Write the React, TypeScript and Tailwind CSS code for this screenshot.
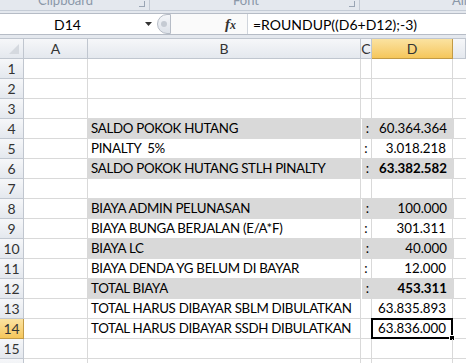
const font = { fontFamily: "Lato, 'Open Sans', sans-serif" };

type Row = {
  n: number;
  label?: string;
  colon?: boolean;
  value?: string;
  bold?: boolean;
  fill?: boolean;
};

const rows: Row[] = [
  { n: 1 },
  { n: 2 },
  { n: 3 },
  { n: 4, label: "SALDO POKOK HUTANG", colon: true, value: "60.364.364", fill: true },
  { n: 5, label: "PINALTY  5%", colon: true, value: "3.018.218" },
  { n: 6, label: "SALDO POKOK HUTANG STLH PINALTY", colon: true, value: "63.382.582", bold: true, fill: true },
  { n: 7 },
  { n: 8, label: "BIAYA ADMIN PELUNASAN", colon: true, value: "100.000", fill: true },
  { n: 9, label: "BIAYA BUNGA BERJALAN (E/A*F)", colon: true, value: "301.311" },
  { n: 10, label: "BIAYA LC", colon: true, value: "40.000", fill: true },
  { n: 11, label: "BIAYA DENDA YG BELUM DI BAYAR", colon: true, value: "12.000" },
  { n: 12, label: "TOTAL BIAYA", colon: true, value: "453.311", bold: true, fill: true },
  { n: 13, label: "TOTAL HARUS DIBAYAR SBLM DIBULATKAN", value: "63.835.893" },
  { n: 14, label: "TOTAL HARUS DIBAYAR SSDH DIBULATKAN", value: "63.836.000" },
  { n: 15 },
  { n: 16 },
];

const Ribbon = () => (
  <div className="flex h-[10px] overflow-hidden bg-[#e4e8ee] text-[13px] leading-none text-[#8a97a8]">
    <div className="relative w-[150px] border-r border-[#c3cad4]">
      <span className="absolute left-[38px] top-[-6px]">Clipboard</span>
      <span className="absolute left-[139px] top-[1px] h-[6px] w-[6px] border-r border-b border-[#9aa5b4]" />
    </div>
    <div className="relative w-[210px] border-r border-[#c3cad4]">
      <span className="absolute left-[83px] top-[-6px]">Font</span>
      <span className="absolute left-[199px] top-[1px] h-[6px] w-[6px] border-r border-b border-[#9aa5b4]" />
    </div>
    <div className="relative flex-1">
      <span className="absolute left-[92px] top-[-6px]">Alignment</span>
    </div>
  </div>
);

const FormulaBar = () => (
  <div className="h-[28px] border-t border-[#c5ccd6] bg-[#e4e8ee] pt-[2px] pb-[4px]">
    <div className="flex h-[22px] border-y border-[#b6bcc6] bg-white">
      <div className="relative flex w-[157px] items-center">
        <span className="w-full pr-[22px] text-center text-[14px] text-black">D14</span>
        <svg className="absolute left-[145px] top-[8px]" width="8" height="5" viewBox="0 0 8 5">
          <path d="M0 0 H7 L3.5 4 Z" fill="#333" />
        </svg>
      </div>
      <div className="flex h-full w-[14px] items-center justify-center rounded-l-full border border-[#b6bcc6] bg-gradient-to-b from-[#f4f6f9] to-[#dde2e9]">
        <span className="h-[6px] w-[6px] rounded-full bg-[#c5cbd3]" />
      </div>
      <div className="flex w-[76px] items-center justify-end bg-[#fafafa] pr-[11px]">
        <span className="text-[15px] font-bold italic text-[#333]" style={{ fontFamily: "'Liberation Serif', serif" }}>
          f<span className="text-[12px]">x</span>
        </span>
      </div>
      <div className="flex flex-1 items-center border-l border-[#d0d5dc] pl-[5px] text-[14px] text-black">
        =ROUNDUP((D6+D12);-3)
      </div>
    </div>
  </div>
);

const hdr = "flex items-center justify-center border-r border-b border-[#c0c6cf] bg-gradient-to-b from-[#f6f7f9] to-[#e4e8ee] text-[14px] text-[#333]";
const sel = "flex items-center justify-center border-r border-b border-[#c29a45] bg-gradient-to-b from-[#fbe3a0] to-[#f5c65a] text-[14px] text-[#333]";

export default function App() {
  return (
    <div className="h-[363px] w-[466px] overflow-hidden bg-white" style={font}>
      <Ribbon />
      <FormulaBar />
      <div className="flex h-[21px] border-t border-[#c0c6cf]">
        <div className={`${hdr} relative w-[24px]`}>
          <svg className="absolute right-[4px] bottom-[4px]" width="10" height="10" viewBox="0 0 10 10">
            <path d="M10 0 V10 H0 Z" fill="#d5d9df" />
          </svg>
        </div>
        <div className={`${hdr} w-[64px]`}>A</div>
        <div className={`${hdr} w-[273px]`}>B</div>
        <div className={`${hdr} w-[11px]`}>C</div>
        <div className={`${sel} w-[81px]`}>D</div>
        <div className={`${hdr} flex-1`} />
      </div>
      {rows.map(r => {
        const fill = r.fill ? "bg-[#d9d9d9] border-b-[#d9d9d9]" : "";
        return (
          <div key={r.n} className="flex h-[20px] text-[13.3px] text-black">
            <div className={`${r.n === 14 ? sel : hdr} w-[24px]`}>{r.n}</div>
            <div className="w-[64px] border-r border-b border-[#d9d9d9]" />
            <div className={`flex w-[273px] items-center border-b border-[#d9d9d9] pl-[3px] tracking-[-0.3px] ${r.fill ? "bg-[#d9d9d9]" : "border-r"}`}>
              {r.label && <span className="whitespace-pre">{r.label}</span>}
            </div>
            <div className={`flex w-[11px] items-center justify-center border-b border-[#d9d9d9] ${r.fill ? "ml-px bg-[#d9d9d9]" : "border-r"}`}>
              {r.colon && ":"}
            </div>
            <div className={`relative flex w-[81px] items-center justify-end border-r border-b border-[#d9d9d9] pr-[6px] ${fill} ${r.bold ? "font-bold" : ""}`}>
              {r.value}
              {r.n === 14 && (
                <div className="absolute -top-px -left-px -right-px -bottom-px border-2 border-black">
                  <span className="absolute -right-[4px] -bottom-[4px] h-[6px] w-[6px] border border-white bg-black" />
                </div>
              )}
            </div>
            <div className="flex-1 border-b border-[#d9d9d9]" />
          </div>
        );
      })}
    </div>
  );
}
